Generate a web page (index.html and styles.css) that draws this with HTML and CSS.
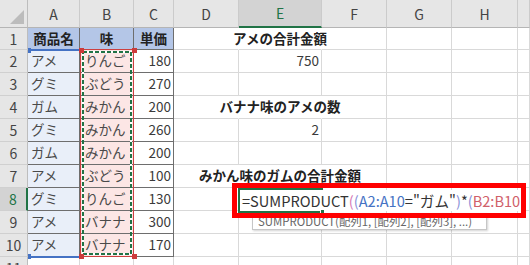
FILE: index.html
```html
<!DOCTYPE html>
<html lang="ja">
<head>
<meta charset="utf-8">
<title>Sheet</title>
<link rel="stylesheet" href="styles.css">
</head>
<body>
<div class="sheet">
  <div class="grid">
    <div class="corner"><svg class="tri" width="16" height="16" viewBox="0 0 16 16"><polygon points="1,15 15,15 15,1" fill="#bcbcbc"/></svg></div>
    <div class="ch">A</div><div class="ch">B</div><div class="ch">C</div><div class="ch">D</div><div class="ch sel">E</div><div class="ch">F</div><div class="ch">G</div><div class="ch">H</div><div class="ch"></div>

    <div class="rh">1</div><div class="c t hd">商品名</div><div class="c t hd">味</div><div class="c t hd">単価</div><div class="c ov"></div><div class="c ov ttl">アメの合計金額</div><div class="c"></div><div class="c"></div><div class="c"></div><div class="c"></div>

    <div class="rh">2</div><div class="c t ca">アメ</div><div class="c t cb">りんご</div><div class="c t num">180</div><div class="c"></div><div class="c num">750</div><div class="c"></div><div class="c"></div><div class="c"></div><div class="c"></div>

    <div class="rh">3</div><div class="c t ca">グミ</div><div class="c t cb">ぶどう</div><div class="c t num">270</div><div class="c"></div><div class="c"></div><div class="c"></div><div class="c"></div><div class="c"></div><div class="c"></div>

    <div class="rh">4</div><div class="c t ca">ガム</div><div class="c t cb">みかん</div><div class="c t num">200</div><div class="c ov"></div><div class="c ov ttl">バナナ味のアメの数</div><div class="c"></div><div class="c"></div><div class="c"></div><div class="c"></div>

    <div class="rh">5</div><div class="c t ca">グミ</div><div class="c t cb">みかん</div><div class="c t num">260</div><div class="c"></div><div class="c num">2</div><div class="c"></div><div class="c"></div><div class="c"></div><div class="c"></div>

    <div class="rh">6</div><div class="c t ca">ガム</div><div class="c t cb">みかん</div><div class="c t num">200</div><div class="c"></div><div class="c"></div><div class="c"></div><div class="c"></div><div class="c"></div><div class="c"></div>

    <div class="rh">7</div><div class="c t ca">アメ</div><div class="c t cb">ぶどう</div><div class="c t num">100</div><div class="c ov"></div><div class="c ov ttl">みかん味のガムの合計金額</div><div class="c"></div><div class="c"></div><div class="c"></div><div class="c"></div>

    <div class="rh sel">8</div><div class="c t ca">グミ</div><div class="c t cb">りんご</div><div class="c t num">130</div><div class="c"></div><div class="c"></div><div class="c"></div><div class="c"></div><div class="c"></div><div class="c"></div>

    <div class="rh">9</div><div class="c t ca">アメ</div><div class="c t cb">バナナ</div><div class="c t num">300</div><div class="c"></div><div class="c"></div><div class="c"></div><div class="c"></div><div class="c"></div><div class="c"></div>

    <div class="rh">10</div><div class="c t ca">アメ</div><div class="c t cb">バナナ</div><div class="c t num">170</div><div class="c"></div><div class="c"></div><div class="c"></div><div class="c"></div><div class="c"></div><div class="c"></div>

    <div class="rh">11</div><div class="c"></div><div class="c"></div><div class="c"></div><div class="c"></div><div class="c"></div><div class="c"></div><div class="c"></div><div class="c"></div><div class="c"></div>
  </div>

  <div class="rng-a"></div>
  <div class="hdl-a top"></div>
  <div class="hdl-a bot"></div>

  <svg class="rng-b" width="60" height="214" viewBox="0 0 60 214">
    <rect x="2.5" y="2.5" width="53" height="207" fill="none" stroke="#cc4040" stroke-width="1"/>
    <rect x="5" y="5" width="48" height="202" fill="none" stroke="#ffffff" stroke-width="2"/>
    <rect x="5" y="5" width="48" height="202" fill="none" stroke="#217346" stroke-width="2" stroke-dasharray="4 2"/>
    <rect x="1" y="1" width="5" height="5" fill="#cc3b3b"/>
    <rect x="54" y="1" width="5" height="5" fill="#cc3b3b"/>
    <rect x="1" y="207" width="5" height="5" fill="#cc3b3b"/>
    <rect x="54" y="207" width="5" height="5" fill="#cc3b3b"/>
  </svg>

  <div class="edit-cell"></div>
  <div class="tip">SUMPRODUCT(配列1, [配列2], [配列3], ...)</div>
  <div class="formula">=SUMPRODUCT<span class="p1">(</span><span class="p2">(</span><span class="r1">A2:A10</span>="ガム"<span class="p2">)</span>*<span class="p2">(</span><span class="r2">B2:B10</span></div>
  <div class="fill-h"></div>
  <div class="mark"></div>
</div>
</body>
</html>
```

FILE: styles.css
```css
* { box-sizing: border-box; margin: 0; padding: 0; }
html, body { width: 530px; height: 265px; overflow: hidden; background: #fff; }
body {
  font-family: "Noto Sans CJK JP", "Noto Sans", sans-serif;
  font-size: 13.5px;
  color: #333;
}
.sheet { position: relative; width: 530px; height: 265px; overflow: hidden; }

.grid {
  display: grid;
  grid-template-columns: 28px 52px 54px 40px 65px 83px 65px 65px 66px 12px;
  grid-template-rows: 28px 22px repeat(10, 23px);
  background: #fff;
}

.corner {
  position: relative;
  background: #e6e6e6;
  border-right: 1px solid #bdbdbd;
  border-bottom: 1px solid #b5b5b5;
}
.tri { position: absolute; right: 2px; bottom: 2px; }

.ch {
  display: flex; align-items: center; justify-content: center;
  background: #e6e6e6;
  border-right: 1px solid #cbcbcb;
  border-bottom: 1px solid #b5b5b5;
  color: #444; font-size: 14px; line-height: 1;
}
.ch.sel { background: #d3d3d3; color: #217346; border-bottom: 2px solid #217346; }

.rh {
  display: flex; align-items: center; justify-content: center;
  background: #e6e6e6;
  border-right: 1px solid #bdbdbd;
  border-bottom: 1px solid #d0d0d0;
  color: #444; font-size: 14px; line-height: 1;
}
.rh.sel { background: #d3d3d3; color: #217346; border-right: 2px solid #217346; }

.c {
  display: flex; align-items: center;
  padding: 0 3px;
  border-right: 1px solid #d9d9d9;
  border-bottom: 1px solid #d9d9d9;
  white-space: nowrap; line-height: 1;
}
.t { border-right-color: #6e6e6e; border-bottom-color: #6e6e6e; }
.hd { background: #b4c6e7; font-weight: bold; justify-content: center; color: #222; }
.ca { background: #e9eff9; color: #4a4a4a; }
.cb { background: #fce6e5; color: #4a4a4a; padding-left: 5px; }
.num { justify-content: flex-end; padding-right: 2px; color: #3a3a3a; }
.ttl { justify-content: center; font-weight: bold; color: #222; }
.ov { border-right-color: transparent; }

.rng-a {
  position: absolute; left: 28px; top: 49px; width: 52px; height: 209px;
  border-top: 2px solid #4472c4; border-bottom: 2px solid #4472c4;
}
.hdl-a { position: absolute; left: 28px; width: 3px; height: 5px; background: #4472c4; }
.hdl-a.top { top: 48px; }
.hdl-a.bot { top: 254px; }

.rng-b { position: absolute; left: 78px; top: 47px; }

.edit-cell {
  position: absolute; left: 238px; top: 188px; width: 85px; height: 25px;
  border: 2px solid #217346;
}
.formula {
  position: absolute; left: 240px; top: 190px; width: 281px; height: 21px;
  background: #fff; padding-left: 2px;
  font-size: 14.6px; line-height: 21px; color: #333; white-space: nowrap; overflow: hidden;
}
.p1 { color: #d678b6; }
.p2 { color: #8a8fd8; }
.r1 { color: #4472c4; }
.r2 { color: #d0606a; }
.fill-h {
  position: absolute; left: 320px; top: 209px; width: 5px; height: 5px;
  background: #217346; border: 1px solid #fff;
}

.tip {
  position: absolute; left: 252px; top: 213px; width: 235px; height: 17px;
  background: #fff; border: 1px solid #c6c6c6;
  box-shadow: 1px 1px 2px rgba(0,0,0,0.18);
  padding-left: 5px;
  font-size: 11.4px; line-height: 15px; color: #666; white-space: nowrap;
}

.mark {
  position: absolute; left: 232px; top: 183px; width: 294px; height: 35px;
  border: 5px solid #ff0000;
}
```
